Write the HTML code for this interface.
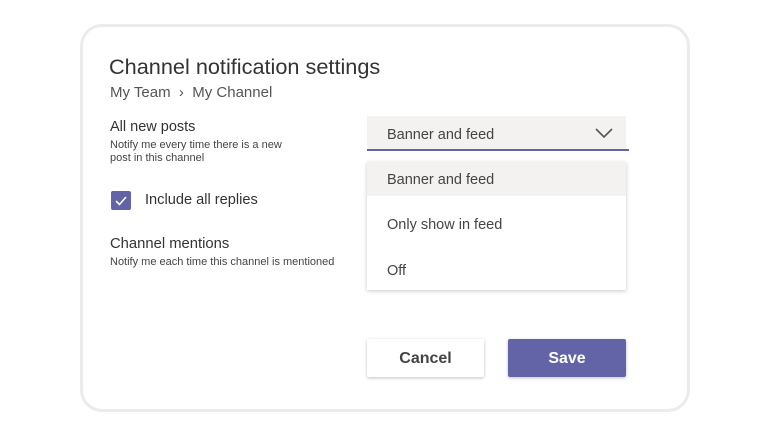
<!DOCTYPE html><html><head><style>
body{margin:0;width:768px;height:442px;background:#fff;font-family:"Liberation Sans",sans-serif;color:#252423;position:relative;overflow:hidden}
.a{position:absolute;white-space:nowrap}
.card{position:absolute;left:80px;top:24px;width:604px;height:382px;border:3px solid #ebebeb;border-radius:22px}
</style></head><body>
<div class="card"></div>
<div class="a" style="left:109px;top:54px;font-size:21.7px;color:#333">Channel notification settings</div>
<div class="a" style="left:110px;top:84px;font-size:15px;color:#555">My Team &nbsp;›&nbsp; My Channel</div>
<div class="a" style="left:110px;top:119px;font-size:14.5px;color:#333">All new posts</div>
<div class="a" style="left:110px;top:139px;font-size:11px;color:#444;line-height:13px">Notify me every time there is a new<br>post in this channel</div>
<div class="a" style="left:111px;top:191px;width:20px;height:19px;background:#6264a7;border-radius:2px"><svg width="20" height="19" viewBox="0 0 20 19"><path d="M5 10l3.5 3.5L15 6" fill="none" stroke="#fff" stroke-width="1.6"/></svg></div>
<div class="a" style="left:145px;top:192px;font-size:14.6px;color:#333">Include all replies</div>
<div class="a" style="left:110px;top:236px;font-size:14.8px;color:#333">Channel mentions</div>
<div class="a" style="left:110px;top:256px;font-size:11px;color:#444">Notify me each time this channel is mentioned</div>
<div class="a" style="left:367px;top:116px;width:259px;height:34px;background:#f3f2f1"></div>
<div class="a" style="left:367px;top:149px;width:262px;height:2px;background:#6264a7"></div>
<div class="a" style="left:387px;top:127px;font-size:14.5px;color:#444">Banner and feed</div>
<svg class="a" style="left:594px;top:127px" width="20" height="12" viewBox="0 0 20 12"><path d="M2 2l8 8 8-8" fill="none" stroke="#555" stroke-width="1.6"/></svg>
<div class="a" style="left:367px;top:162px;width:259px;height:128px;background:#fff;box-shadow:0 1px 4px rgba(0,0,0,.22)"></div>
<div class="a" style="left:367px;top:162px;width:259px;height:34px;background:#f3f2f1"></div>
<div class="a" style="left:387px;top:172px;font-size:14.5px;color:#444">Banner and feed</div>
<div class="a" style="left:387px;top:217px;font-size:14.5px;color:#444">Only show in feed</div>
<div class="a" style="left:387px;top:263px;font-size:14.5px;color:#444">Off</div>
<div class="a" style="left:367px;top:339px;width:117px;height:38px;background:#fff;box-shadow:0 1px 3px rgba(0,0,0,.25);border-radius:2px;text-align:center;line-height:40px;font-size:16px;font-weight:bold;color:#444">Cancel</div>
<div class="a" style="left:508px;top:339px;width:118px;height:38px;background:#6264a7;box-shadow:0 1px 3px rgba(0,0,0,.25);border-radius:2px;text-align:center;line-height:40px;font-size:16px;font-weight:bold;color:#fff">Save</div>
</body></html>
